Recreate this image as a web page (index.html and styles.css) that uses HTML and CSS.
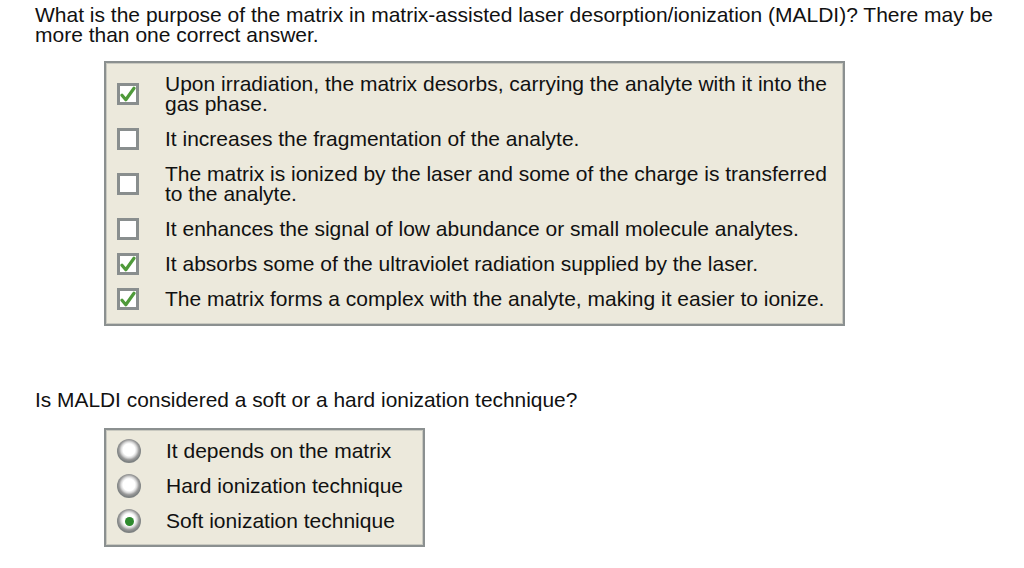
FILE: index.html
```html
<!DOCTYPE html>
<html>
<head>
<meta charset="utf-8">
<link rel="stylesheet" href="styles.css">
</head>
<body>
<div class="page">
  <p class="question">What is the purpose of the matrix in matrix-assisted laser desorption/ionization (MALDI)? There may be more than one correct answer.</p>
  <div class="box box-wide">
    <div class="row"><span class="cb checked"><svg viewBox="0 0 16 16" width="17" height="17"><path d="M2 8.8 L5.8 13.2 L14 1.8" fill="none" stroke="#4f9a3a" stroke-width="3.2" stroke-linecap="round" stroke-linejoin="round"/></svg></span><span class="txt">Upon irradiation, the matrix desorbs, carrying the analyte with it into the gas phase.</span></div>
    <div class="row"><span class="cb"></span><span class="txt">It increases the fragmentation of the analyte.</span></div>
    <div class="row"><span class="cb"></span><span class="txt">The matrix is ionized by the laser and some of the charge is transferred to the analyte.</span></div>
    <div class="row"><span class="cb"></span><span class="txt">It enhances the signal of low abundance or small molecule analytes.</span></div>
    <div class="row"><span class="cb checked"><svg viewBox="0 0 16 16" width="17" height="17"><path d="M2 8.8 L5.8 13.2 L14 1.8" fill="none" stroke="#4f9a3a" stroke-width="3.2" stroke-linecap="round" stroke-linejoin="round"/></svg></span><span class="txt">It absorbs some of the ultraviolet radiation supplied by the laser.</span></div>
    <div class="row"><span class="cb checked"><svg viewBox="0 0 16 16" width="17" height="17"><path d="M2 8.8 L5.8 13.2 L14 1.8" fill="none" stroke="#4f9a3a" stroke-width="3.2" stroke-linecap="round" stroke-linejoin="round"/></svg></span><span class="txt">The matrix forms a complex with the analyte, making it easier to ionize.</span></div>
  </div>
  <p class="question q2">Is MALDI considered a soft or a hard ionization technique?</p>
  <div class="box box-narrow">
    <div class="row"><span class="radio"></span><span class="txt">It depends on the matrix</span></div>
    <div class="row"><span class="radio"></span><span class="txt">Hard ionization technique</span></div>
    <div class="row"><span class="radio selected"><span class="dot"></span></span><span class="txt">Soft ionization technique</span></div>
  </div>
</div>
</body>
</html>
```
FILE: styles.css
```css
html, body {
  margin: 0;
  padding: 0;
  background: #ffffff;
}
body {
  font-family: "Liberation Sans", Arial, sans-serif;
  color: #111111;
}
.page {
  padding: 5px 0 0 35px;
}
.question {
  margin: 0;
  font-size: 21px;
  line-height: 20px;
  width: 975px;
}
.box {
  margin: 16px 0 0 69px;
  background: #ece9dc;
  border: 2px solid #8b9090;
  box-shadow: inset 1px 1px 0 #c9c9c0, inset -1px -1px 0 #c9c9c0;
  padding: 3.5px 0 7.5px 0;
  box-sizing: border-box;
}
.box-wide {
  width: 741px;
}
.box-narrow {
  width: 321px;
  margin-top: 18px;
  padding: 3.5px 0 6.5px 0;
}
.q2 {
  margin-top: 64px;
  font-size: 20.9px;
}
.row {
  display: flex;
  align-items: center;
}
.txt {
  font-size: 21px;
  line-height: 20px;
  padding: 7.5px 0;
  margin-left: 26px;
  width: 675px;
}
.box-narrow .txt {
  margin-left: 25px;
}
.cb {
  flex: none;
  margin-left: 11px;
  width: 22px;
  height: 22px;
  box-sizing: border-box;
  border: 3px solid #898e8e;
  background: #ffffff;
  display: flex;
  align-items: center;
  justify-content: center;
}
.cb svg {
  display: block;
}
.radio {
  flex: none;
  margin-left: 11px;
  width: 24px;
  height: 24px;
  border-radius: 50%;
  box-sizing: border-box;
  background: radial-gradient(circle at 50% 45%, #ffffff 0, #ffffff 6px, #d8d8d8 8px, #9a9a9a 10px, #7e8282 12px);
  display: flex;
  align-items: center;
  justify-content: center;
}
.dot {
  width: 9px;
  height: 9px;
  border-radius: 50%;
  background: #2e8a2e;
}
```
